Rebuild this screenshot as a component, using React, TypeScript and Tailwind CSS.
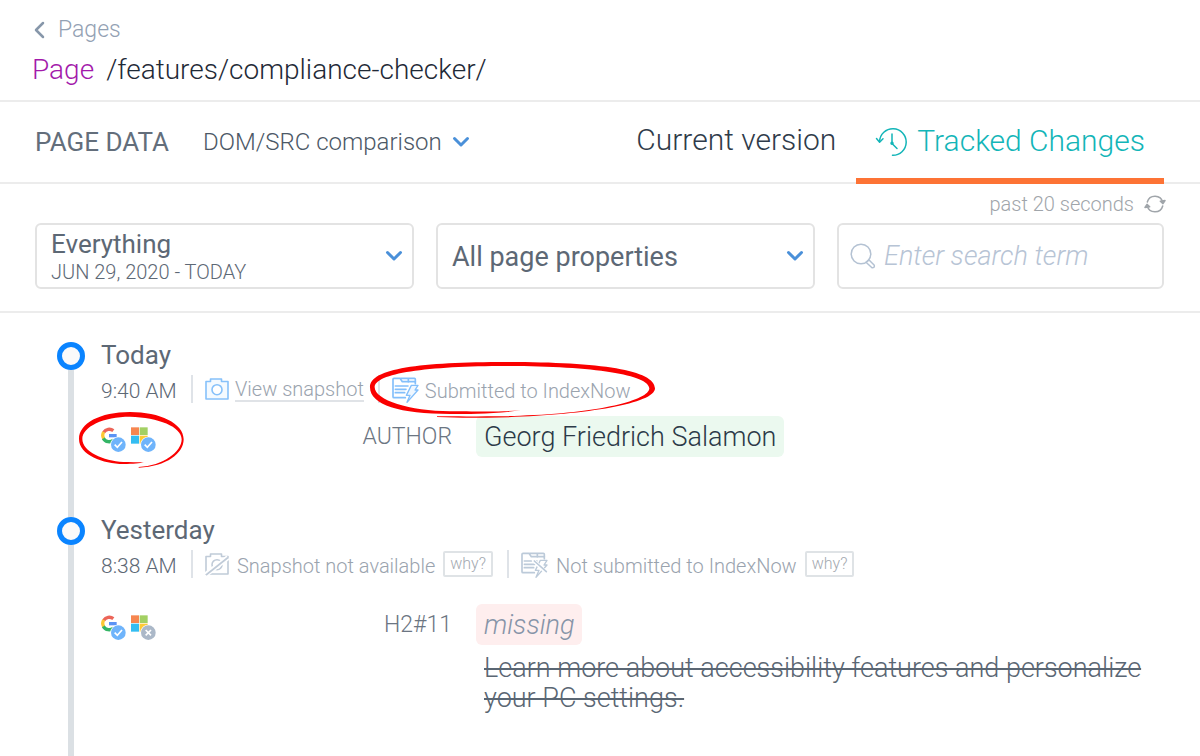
import React from 'react';

interface IconProps {
  className?: string;
}

const ChevronIcon: React.FC<IconProps> = ({ className }) => (
  <svg viewBox="0 0 18 12" fill="none" stroke="currentColor" strokeWidth="3" strokeLinecap="round" strokeLinejoin="round" className={`w-[18px] h-3 shrink-0 pointer-events-none text-[#4a90d9] ${className ?? ''}`}>
    <path d="M2.5 2.5 9 9l6.500-6.500" />
  </svg>
);

const HistoryIcon = () => (
  <svg viewBox="0 0 32 32" fill="none" stroke="currentColor" strokeWidth="1.500" strokeLinecap="round" strokeLinejoin="round" className="w-8 h-8 mt-1 shrink-0">
    <path d="M4.600 15.500A13.300 13.300 0 1 1 17.500 29.300" />
    <path d="M1.500 12.500 4.600 16.200 8 12.800" />
    <path d="M17 8v9.500l5 5" />
    <circle cx="17" cy="17.200" r="1" fill="currentColor" />
  </svg>
);

const RefreshIcon = () => (
  <svg viewBox="0 0 22 20" fill="none" stroke="currentColor" strokeWidth="1.500" strokeLinecap="round" strokeLinejoin="round" className="w-[22px] h-5">
    <path d="M3.300 8A8 8 0 0 1 18.800 8.300" />
    <path d="M18.700 12A8 8 0 0 1 3.200 11.700" />
    <path d="M16.300 7.200 19 9.600 21 6.600Z" fill="currentColor" />
    <path d="M5.700 12.800 3 10.400 1 13.400Z" fill="currentColor" />
  </svg>
);

const SearchIcon = () => (
  <svg viewBox="0 0 26 26" fill="none" stroke="currentColor" strokeWidth="1.500" strokeLinejoin="round" className="w-[26px] h-[26px] shrink-0 text-[#b4c2d3]">
    <circle cx="11" cy="11" r="9.800" />
    <path d="M16 19.200 18.800 16.800 24.300 22.300Q24.800 25 22 24.800Z" />
  </svg>
);

const CameraIcon: React.FC<{ off?: boolean }> = ({ off }) => (
  <svg viewBox="0 0 24 24" fill="none" stroke="currentColor" strokeWidth="1.600" strokeLinejoin="round" className={`w-6 h-6 shrink-0 ${off ? 'text-[#c0cbd8]' : 'text-[#86c1fa]'}`}>
    <path d="M1 4.500h4.500V2h11v2.500H23V22H1Z" fill={off ? 'none' : '#f4faff'} />
    <circle cx="12" cy="12.700" r="5" fill="white" />
    {off && (
      <>
        <path d="M1 22.500 23 5.500" stroke="white" strokeWidth="5" />
        <path d="M1 23 23 5.500" />
      </>
    )}
  </svg>
);

const IndexNowIcon: React.FC<{ off?: boolean }> = ({ off }) => (
  <svg viewBox="0 0 81 81" fill="none" stroke="currentColor" strokeWidth="5" strokeLinecap="round" strokeLinejoin="round" className={`w-[27px] h-[27px] mt-[2px] shrink-0 ${off ? 'text-[#bccad9]' : 'text-[#83bffb]'}`}>
    <path d="M40 62H6Q3 62 3 59V7Q3 4 6 4H24L31 14H70V20" />
    <path d="M27 4H67Q70 4 70 7V14M49 4V14" />
    <path d="M10 27H48M10 37H42M10 47H38" />
    <path d="M58 25H78L69 39H78L45 76L54 55H43Z" fill={off ? 'none' : '#eff7ff'} strokeWidth="4" />
    {off && (
      <>
        <path d="M38 26 74 60" stroke="white" strokeWidth="11" />
        <path d="M40 27 76 59" />
      </>
    )}
  </svg>
);

const StatusBadge: React.FC<{ ok: boolean }> = ({ ok }) => (
  <>
    <circle cx="52" cy="53" r="24" fill="white" />
    <circle cx="52" cy="53" r="22" fill={ok ? '#6fb4fb' : '#abb8c8'} />
    <path d={ok ? 'M41 53 49 61 63 45' : 'M44 45 60 61M60 45 44 61'} fill="none" stroke="white" strokeWidth="5" />
  </>
);

const GoogleStatus: React.FC<{ ok: boolean }> = ({ ok }) => (
  <svg viewBox="0 0 78 78" fill="none" strokeWidth="10" role="img" aria-label="Google" className="w-[26px] h-[26px]">
    <path d="M8 16A20 20 0 0 1 37 11" stroke="#ec6559" />
    <path d="M8 35A20 20 0 0 1 8 15" stroke="#fcc934" />
    <path d="M38 39A20 20 0 0 1 7 34" stroke="#34b566" />
    <path d="M24 26H47" stroke="#5b93f5" />
    <StatusBadge ok={ok} />
  </svg>
);

const BingStatus: React.FC<{ ok: boolean }> = ({ ok }) => (
  <svg viewBox="0 0 78 78" role="img" aria-label="Bing" className="w-[26px] h-[26px]">
    <path d="M0 1H24V24H0Z" fill="#f68650" />
    <path d="M26 1H50V24H26Z" fill="#a3d063" />
    <path d="M0 26H24V50H0Z" fill="#34bdf2" />
    <path d="M26 26H50V50H26Z" fill="#fdca35" />
    <StatusBadge ok={ok} />
  </svg>
);

const Divider = () => <span className="w-[2px] h-7 shrink-0 bg-[#dfe3e8]" />;

const WhyButton = () => (
  <button className="h-[26px] px-[5px] border-2 border-[#dfe3e6] rounded-xs text-[16px] leading-5 text-[#a3a9b0]">why?</button>
);

interface EntryProps {
  title: string;
  time: string;
  details: React.ReactNode;
  bingOk: boolean;
  annotation?: React.ReactNode;
  label: string;
  rowClass: string;
  children: React.ReactNode;
}

const TimelineEntry: React.FC<EntryProps> = ({ title, time, details, bingOk, annotation, label, rowClass, children }) => (
  <li className="flex gap-4 last:grow">
    <div className="flex flex-col items-center w-7 shrink-0">
      <span className="w-7 h-7 shrink-0 rounded-full border-[5px] border-[#0a84ff] bg-[#fafafa]" />
      <span className="w-[6px] grow bg-[#dbe0e4]" />
    </div>
    <div className="grow pb-[59px]">
      <h2 className="text-[26px] leading-[26px] font-normal text-[#5d6875]">{title}</h2>
      <div className="flex items-center mt-[7px] h-7 text-[20px] leading-7 whitespace-nowrap text-[#9aa3ae]">
        <time className="w-[78px] mr-3 pt-[3px] text-[21px] text-[#5d6875]">{time}</time>
        <Divider />
        {details}
      </div>
      <div className={`flex gap-6 ${rowClass}`}>
        <div className="flex items-start justify-between w-[351px] shrink-0">
          <div className="relative flex gap-1 mt-[11px]">
            <GoogleStatus ok />
            <BingStatus ok={bingOk} />
            {annotation}
          </div>
          <span className="text-[23px] leading-[42px] text-[#6b7582]">{label}</span>
        </div>
        <div className="text-[27px] leading-[30px]">{children}</div>
      </div>
    </div>
  </li>
);

const App: React.FC = () => {
  return (
    <div className="flex flex-col min-h-screen bg-white font-['Roboto',sans-serif] font-light">
      {/* Header */}
      <header className="px-8 pt-4 pb-3 border-b-2 border-[#ececec]">
        <a href="#pages" className="flex w-fit items-center gap-3 text-[23px] leading-7 text-[#93a1b3]">
          <svg viewBox="0 0 14 18" fill="none" stroke="#8797aa" strokeWidth="2.500" strokeLinecap="round" strokeLinejoin="round" className="w-[14px] h-[18px]">
            <path d="M11 2 4 9l7 7" />
          </svg>
          Pages
        </a>
        <h1 className="flex gap-3 mt-2 text-[28px] leading-9 text-[#1f2a37]">
          <span className="text-[#a31aab]">Page</span>
          /features/compliance-checker/
        </h1>
      </header>

      {/* Page data and tabs */}
      <div className="flex items-stretch justify-between h-[82px] pl-[35px] pr-9 border-b-2 border-[#ececec]">
        <div className="flex items-center gap-[34px]">
          <span className="text-[26px] font-normal text-[#636e7b]">PAGE DATA</span>
          <label className="flex items-center gap-[10px]">
            <select aria-label="Comparison mode" className="appearance-none text-[24px] text-[#4c5866]">
              <option>DOM/SRC comparison</option>
            </select>
            <ChevronIcon />
          </label>
        </div>
        <nav className="flex items-stretch text-[30px] whitespace-nowrap">
          <a href="#current" className="flex items-center px-5 pb-[6px] text-[#2f3b4a]">Current version</a>
          <a href="#changes" className="flex items-center gap-[10px] px-[19px] -mb-[2px] border-b-6 border-[#fd7335] text-[#13b5b8]">
            <HistoryIcon />
            Tracked Changes
          </a>
        </nav>
      </div>

      {/* Filters */}
      <section className="pl-[35px] pr-9 pb-[22px] border-b-2 border-[#ececec]">
        <div className="flex items-center justify-end gap-[10px] h-[39px] -mr-[2px] text-[20px] text-[#a0a5aa]">
          past 20 seconds
          <button aria-label="Refresh">
            <RefreshIcon />
          </button>
        </div>
        <div className="grid grid-cols-[minmax(0,379fr)_minmax(0,379fr)_minmax(0,327fr)] gap-[22px]">
          <label className="relative flex flex-col justify-center h-[66px] px-[14px] border-2 border-[#e3e3e3] rounded-md text-[#5d6875]">
            <select aria-label="Date range" className="appearance-none text-[26px] leading-8 font-normal">
              <option>Everything</option>
            </select>
            <span className="text-[20px] leading-6">JUN 29, 2020 - TODAY</span>
            <ChevronIcon className="absolute right-[9px] top-[25px]" />
          </label>
          <label className="flex items-center h-[66px] pl-[14px] pr-[9px] border-2 border-[#e3e3e3] rounded-md text-[#5d6875]">
            <select aria-label="Page property" className="appearance-none grow pt-[2px] text-[27px] leading-8 font-normal">
              <option>All page properties</option>
            </select>
            <ChevronIcon />
          </label>
          <label className="flex items-center gap-2 h-[66px] px-[11px] border-2 border-[#e3e3e3] rounded-md">
            <SearchIcon />
            <input
              type="search"
              aria-label="Search"
              placeholder="Enter search term"
              className="grow min-w-0 text-[27px] italic placeholder:text-[#b7c4d5] focus:outline-none"
            />
          </label>
        </div>
      </section>

      {/* Timeline */}
      <ol className="flex flex-col grow pt-[29px] pl-[57px] pr-9">
        <TimelineEntry
          title="Today"
          time="9:40 AM"
          bingOk
          label="AUTHOR"
          rowClass="mt-[13px]"
          annotation={
            <svg viewBox="111 240 330 180" className="absolute -left-6 -top-[17px] w-[110px] h-[60px] max-w-none pointer-events-none" fill="#fa0000">
              <path d="M296 413C380 410 431 370 431 328C431 280 360 246 270 246C180 246 117 280 117 327C117 375 190 402 250 402C280 402 300 400 312 397C290 397 270 396 250 396C190 393 127 365 127 327C127 290 190 260 270 260C355 262 425 290 425 328C425 365 370 408 296 411Z" />
            </svg>
          }
          details={
            <>
              <a href="#snapshot" className="flex items-center gap-[6px] ml-3 mr-[14px]">
                <CameraIcon />
                <span className="pt-px leading-[22px] border-b-2 border-[#e0e3e7]">View snapshot</span>
              </a>
              <Divider />
              <span className="relative flex items-center gap-[6px] ml-3">
                <IndexNowIcon />
                <span className="pt-[3px]">Submitted to IndexNow</span>
                <svg viewBox="24 30 870 180" className="absolute -left-6 -top-[14px] w-[290px] h-[60px] max-w-none pointer-events-none" fill="#fa0000">
                  <path d="M231 199C300 199 380 200 480 197C720 190 868 150 868 115C868 75 700 48 440 48C200 48 44 70 44 112C44 150 150 184 270 184C370 184 400 187 483 181C400 192 330 192 270 192C120 192 30 165 30 112C30 55 180 36 440 36C720 36 885 60 885 115C885 165 640 200 380 203C320 204 280 203 231 201Z" />
                </svg>
              </span>
            </>
          }
        >
          <span className="block w-fit px-2 pt-[6px] pb-1 leading-[31px] rounded-md bg-[#ebf9ef] text-[#2c3a48]">Georg Friedrich Salamon</span>
        </TimelineEntry>

        <TimelineEntry
          title="Yesterday"
          time="8:38 AM"
          bingOk={false}
          label="H2#11"
          rowClass="mt-[26px]"
          details={
            <>
              <span className="flex items-center gap-2 ml-3 mr-[14px]">
                <CameraIcon off />
                <span className="pt-[3px]">Snapshot not available</span>
                <WhyButton />
              </span>
              <Divider />
              <span className="flex items-center gap-2 ml-3">
                <IndexNowIcon off />
                <span className="pt-[3px]">Not submitted to IndexNow</span>
                <WhyButton />
              </span>
            </>
          }
        >
          <em className="block w-fit px-2 pt-[6px] pb-1 leading-[31px] rounded-md bg-[#feeeee] text-[#8694a8]">missing</em>
          <del className="block mt-2 pl-2 decoration-2 text-[#5a6673]">
            Learn more about accessibility features and personalize your PC settings.
          </del>
        </TimelineEntry>
      </ol>
    </div>
  );
};

export default App;
